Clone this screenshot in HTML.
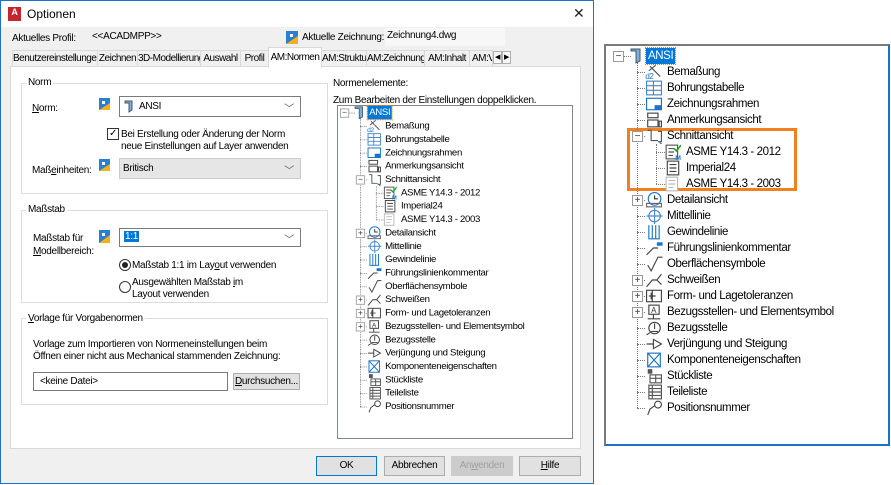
<!DOCTYPE html>
<html><head><meta charset="utf-8">
<style>
*{margin:0;padding:0;box-sizing:border-box}
body{width:891px;height:485px;background:#fff;position:relative;overflow:hidden;font-family:"Liberation Sans",sans-serif;font-size:10px;letter-spacing:-0.3px;color:#000}
.a{position:absolute;white-space:nowrap}
#dlg{position:absolute;left:0;top:0;width:594px;height:484px;background:#f0f0f0;border:1px solid #1a73c8}
.tab{position:absolute;top:50px;height:17px;border:1px solid #d9d9d9;background:#f0f0f0;font-size:10px;letter-spacing:-0.5px;line-height:15px;text-align:center;white-space:nowrap;overflow:hidden}
.grp{position:absolute;border:1px solid #dcdcdc}
.lbl{position:absolute;background:#fff;padding:0 2px;white-space:nowrap}
.combo{position:absolute;border:1px solid #7a7a7a;background:#fff;height:21px}
.chev{position:absolute;right:6px;top:3px;font-size:10px;color:#555}
.btn{position:absolute;top:456px;height:20px;border:1px solid #adadad;background:#e1e1e1;text-align:center;line-height:18px}
.tree{position:absolute;width:280px;height:370px;letter-spacing:-0.4px}
.tree .t{position:absolute;white-space:nowrap;font-size:11.5px;line-height:16px}
.tree .v{position:absolute;border-left:1px dotted #777;width:0}
.tree .h{position:absolute;border-top:1px dotted #777;height:0}
.tree .x{position:absolute;width:11px;height:11px;border:1px solid #999;background:#fff;font-size:10px;line-height:9px;text-align:center;color:#333;letter-spacing:0}
.tree svg{position:absolute}
</style></head><body>
<div id="dlg"></div>
<div class="a" style="left:1px;top:1px;width:592px;height:26px;background:#fff"></div>
<div class="a" style="left:8px;top:7px;width:13px;height:14px;background:#c4262e;color:#fff;font-size:9px;font-weight:bold;text-align:center;line-height:11px">A</div>
<div class="a" style="left:27px;top:7px;font-size:12px;letter-spacing:0">Optionen</div>
<div class="a" style="left:573px;top:5px;font-size:14px;color:#222">✕</div>

<div class="a" style="left:12px;top:33px">Aktuelles Profil:</div>
<div class="a" style="left:92px;top:31px">&lt;&lt;ACADMPP&gt;&gt;</div>
<svg class="a" style="left:286px;top:31px" width="12" height="13"><rect width="12" height="13" fill="#2a7fd0"/><polygon points="0,13 12,5 12,13" fill="#f0b020"/><rect x="4" y="3" width="3" height="3" fill="#fff"/></svg>
<div class="a" style="left:302px;top:32px">Aktuelle Zeichnung:</div>
<div class="a" style="left:385px;top:28px;width:120px;height:18px;background:#f7f7f7"></div>
<div class="a" style="left:387px;top:30px">Zeichnung4.dwg</div>

<div class="tab" style="left:12px;width:86px">Benutzereinstellungen</div>
<div class="tab" style="left:97px;width:41px">Zeichnen</div>
<div class="tab" style="left:137px;width:64px">3D-Modellierung</div>
<div class="tab" style="left:200px;width:41px">Auswahl</div>
<div class="tab" style="left:240px;width:29px">Profil</div>
<div class="tab" style="left:321px;width:46px">AM:Struktur</div>
<div class="tab" style="left:366px;width:59px">AM:Zeichnung</div>
<div class="tab" style="left:424px;width:46px">AM:Inhalt</div>
<div class="tab" style="left:469px;width:24px;text-align:left;padding-left:2px">AM:V</div>
<div class="a" style="left:493px;top:51px;width:9px;height:13px;border:1px solid #adadad;background:#f7f7f7;font-size:7px;line-height:11px;text-align:center">◀</div>
<div class="a" style="left:502px;top:51px;width:9px;height:13px;border:1px solid #adadad;background:#f7f7f7;font-size:7px;line-height:11px;text-align:center">▶</div>
<div class="a" style="left:10px;top:66px;width:571px;height:383px;background:#fff;border:1px solid #d9d9d9"></div>
<div class="tab" style="left:268px;top:47px;width:54px;height:21px;background:#fff;border-bottom:none;line-height:19px">AM:Normen</div>

<div class="grp" style="left:21px;top:83px;width:307px;height:111px"></div>
<div class="lbl" style="left:26px;top:77px">Norm</div>
<div class="a" style="left:32px;top:103px"><u>N</u>orm:</div>
<svg class="a" style="left:99px;top:98px" width="11" height="12"><rect width="11" height="12" fill="#2a7fd0"/><polygon points="0,12 11,5 11,12" fill="#f0b020"/><rect x="3" y="3" width="3" height="3" fill="#fff"/></svg>
<div class="combo" style="left:119px;top:96px;width:182px"><svg class="a" style="left:4px;top:3px" width="9" height="13"><path d="M1 1h7v9l-3 2v-9h-4z" fill="#7ab0e0" stroke="#456"/></svg><span class="a" style="left:19px;top:4px">ANSI</span><span class="chev">﹀</span></div>
<div class="a" style="left:107px;top:128px;width:12px;height:12px;border:1px solid #333;background:#fff;font-size:10px;line-height:10px;text-align:center">✓</div>
<div class="a" style="left:121px;top:129px">Bei Erstellung oder Änderung der Norm</div>
<div class="a" style="left:121px;top:141px">neue Einstellungen auf Layer anwenden</div>
<div class="a" style="left:32px;top:165px">Maß<u>e</u>inheiten:</div>
<svg class="a" style="left:99px;top:159px" width="11" height="12"><rect width="11" height="12" fill="#2a7fd0"/><polygon points="0,12 11,5 11,12" fill="#f0b020"/><rect x="3" y="3" width="3" height="3" fill="#fff"/></svg>
<div class="combo" style="left:119px;top:158px;width:182px;background:#e6e6e6;border-color:#ccc"><span class="a" style="left:3px;top:4px">Britisch</span><span class="chev">﹀</span></div>

<div class="grp" style="left:21px;top:210px;width:307px;height:93px"></div>
<div class="lbl" style="left:26px;top:204px">Maßstab</div>
<div class="a" style="left:33px;top:233px">Maßstab für</div>
<div class="a" style="left:33px;top:246px"><u>M</u>odellbereich:</div>
<svg class="a" style="left:99px;top:230px" width="11" height="13"><rect width="11" height="13" fill="#2a7fd0"/><polygon points="0,13 11,5 11,13" fill="#f0b020"/><rect x="3" y="3" width="3" height="3" fill="#fff"/></svg>
<div class="combo" style="left:119px;top:228px;width:182px;height:19px"><span class="a" style="left:4px;top:2px;background:#0078d7;color:#fff;padding:0 1px">1:1</span><span class="chev" style="top:2px">﹀</span></div>
<div class="a" style="left:119px;top:259px;width:12px;height:12px;border:1px solid #333;border-radius:50%;background:#fff"><div style="margin:2px;width:6px;height:6px;border-radius:50%;background:#222"></div></div>
<div class="a" style="left:132px;top:260px">Maßstab 1:1 im Lay<u>o</u>ut verwenden</div>
<div class="a" style="left:119px;top:281px;width:12px;height:12px;border:1px solid #333;border-radius:50%;background:#fff"></div>
<div class="a" style="left:132px;top:277px">Ausgewählten Maßstab <u>i</u>m</div>
<div class="a" style="left:132px;top:289px">Layout verwenden</div>

<div class="grp" style="left:21px;top:318px;width:307px;height:87px"></div>
<div class="lbl" style="left:26px;top:313px"><u>V</u>orlage für Vorgabenormen</div>
<div class="a" style="left:33px;top:339px">Vorlage zum Importieren von Normeneinstellungen beim</div>
<div class="a" style="left:33px;top:351px">Öffnen einer nicht aus Mechanical stammenden Zeichnung:</div>
<div class="a" style="left:33px;top:372px;width:195px;height:19px;border:1px solid #7a7a7a;background:#fff;padding:3px 6px">&lt;keine Datei&gt;</div>
<div class="a" style="left:233px;top:373px;width:67px;height:17px;border:1px solid #adadad;background:#e1e1e1;text-align:center;line-height:15px"><u>D</u>urchsuchen...</div>

<div class="a" style="left:333px;top:78px">Normenelemente:</div>
<div class="a" style="left:333px;top:95px">Zum Bearbeiten der Einstellungen doppelklicken.</div>
<div class="a" style="left:337px;top:105px;width:236px;height:334px;border:1px solid #828790;background:#fff"></div>

<div class="btn" style="left:316px;width:61px;border:1px solid #0078d7">OK</div>
<div class="btn" style="left:384px;width:61px">Abbrechen</div>
<div class="btn" style="left:451px;width:62px;color:#a0a0a0;border-color:#ccc;background:#ccc">An<u>w</u>enden</div>
<div class="btn" style="left:519px;width:62px"><u>H</u>ilfe</div>

<div class="a" style="left:604px;top:44px;width:286px;height:402px;border:2px solid #7a7a7a;border-right-color:#1a73c8;border-bottom-color:#1a73c8;background:#fff"></div>
<div class="a" style="left:627px;top:128px;width:170px;height:63px;border:3px solid #f08020"></div>

<!-- TREE 1 -->
<div class="tree" style="left:340px;top:106px;transform:scale(0.835);transform-origin:0 0">
<div class="v" style="left:24px;top:14px;height:346px"></div>
<div class="x" style="left:0;top:3px">−</div><div class="h" style="left:11px;top:8px;width:7px"></div>
<svg style="left:17px;top:0" width="12" height="16"><path d="M1 1h9v12l-4 2v-12h-5z" fill="#7ab0e0" stroke="#456"/></svg>
<div class="t" style="left:33px;top:0;background:#0078d7;color:#fff;padding:0 2px;outline:1px dotted #e08000">ANSI</div>
<div class="h" style="left:24px;top:24px;width:8px"></div><div class="h" style="left:24px;top:40px;width:8px"></div><div class="h" style="left:24px;top:56px;width:8px"></div><div class="h" style="left:24px;top:72px;width:8px"></div><div class="h" style="left:24px;top:88px;width:8px"></div><div class="h" style="left:24px;top:152px;width:8px"></div><div class="h" style="left:24px;top:168px;width:8px"></div><div class="h" style="left:24px;top:184px;width:8px"></div><div class="h" style="left:24px;top:200px;width:8px"></div><div class="h" style="left:24px;top:216px;width:8px"></div><div class="h" style="left:24px;top:232px;width:8px"></div><div class="h" style="left:24px;top:248px;width:8px"></div><div class="h" style="left:24px;top:264px;width:8px"></div><div class="h" style="left:24px;top:280px;width:8px"></div><div class="h" style="left:24px;top:296px;width:8px"></div><div class="h" style="left:24px;top:312px;width:8px"></div><div class="h" style="left:24px;top:328px;width:8px"></div><div class="h" style="left:24px;top:344px;width:8px"></div><div class="h" style="left:24px;top:360px;width:8px"></div>
<div class="x" style="left:19px;top:83px">−</div><div class="x" style="left:19px;top:147px">+</div><div class="x" style="left:19px;top:227px">+</div><div class="x" style="left:19px;top:243px">+</div><div class="x" style="left:19px;top:259px">+</div>
<div class="v" style="left:43px;top:96px;height:40px"></div>
<div class="h" style="left:43px;top:104px;width:9px"></div><div class="h" style="left:43px;top:120px;width:9px"></div><div class="h" style="left:43px;top:136px;width:9px"></div>
<svg style="left:32px;top:16px" width="18" height="16" viewBox="0 0 15 14"><path d="M4 2l9 9M3 6l6-5" stroke="#555" fill="none"/><text x="0" y="13" font-size="7" fill="#1a73c8" font-family="Liberation Sans">d2</text></svg>
<svg style="left:32px;top:32px" width="18" height="16" viewBox="0 0 15 14"><rect x="1" y="1" width="13" height="12" fill="#fff" stroke="#4a88c8"/><path d="M1 5h13M1 9h13M7 1v12" stroke="#4a88c8"/></svg>
<svg style="left:32px;top:48px" width="18" height="16" viewBox="0 0 15 14"><rect x="1" y="2" width="13" height="10" fill="#fff" stroke="#1a73c8"/><rect x="8" y="8" width="6" height="4" fill="#1a73c8"/></svg>
<svg style="left:32px;top:64px" width="18" height="16" viewBox="0 0 15 14"><rect x="2" y="1" width="9" height="4" fill="none" stroke="#444"/><rect x="2" y="7" width="9" height="6" fill="none" stroke="#444"/><rect x="12" y="8" width="2" height="5" fill="none" stroke="#444"/></svg>
<svg style="left:32px;top:80px" width="18" height="16" viewBox="0 0 15 14"><path d="M2 2h3v9h6M11 3h3v9h-3" stroke="#555" fill="none"/><path d="M12 12l2 2" stroke="#1a73c8"/></svg>
<svg style="left:52px;top:96px" width="16" height="16" viewBox="0 0 14 14"><rect x="1" y="1" width="10" height="12" fill="#fff" stroke="#555"/><path d="M3 4h5M3 7h5M3 10h4" stroke="#555"/><path d="M8 4l2 2 4-5" stroke="#2a2" fill="none" stroke-width="1.5"/><text x="9" y="14" font-size="6" fill="#1a73c8" font-weight="bold">M</text></svg>
<svg style="left:52px;top:112px" width="16" height="16" viewBox="0 0 14 14"><rect x="2" y="1" width="10" height="12" fill="#fff" stroke="#444"/><path d="M4 4h6M4 7h6M4 10h6" stroke="#444"/></svg>
<svg style="left:52px;top:128px" width="16" height="16" viewBox="0 0 14 14"><rect x="1" y="1" width="10" height="12" fill="#fff" stroke="#bbb"/><path d="M3 4h6M3 7h6M3 10h4" stroke="#bbb"/></svg>
<svg style="left:32px;top:144px" width="18" height="16" viewBox="0 0 15 14"><circle cx="8" cy="6" r="5.5" fill="#fff" stroke="#1a73c8"/><path d="M8 3v3h3" stroke="#333" fill="none"/><rect x="1" y="10" width="13" height="3" fill="none" stroke="#666"/></svg>
<svg style="left:32px;top:160px" width="18" height="16" viewBox="0 0 15 14"><circle cx="8" cy="7" r="5" fill="none" stroke="#4a88c8"/><path d="M1 7h14M8 0v14" stroke="#4a88c8"/></svg>
<svg style="left:32px;top:176px" width="18" height="16" viewBox="0 0 15 14"><path d="M3 1v12h9V1M6 1v12M9 1v12" stroke="#1a73c8" fill="none"/></svg>
<svg style="left:32px;top:192px" width="18" height="16" viewBox="0 0 15 14"><path d="M1 13l6-6h4" stroke="#444" fill="none"/><rect x="10" y="2" width="5" height="3" fill="#1a73c8"/></svg>
<svg style="left:32px;top:208px" width="18" height="16" viewBox="0 0 15 14"><path d="M2 8l3 5 6-12h4" stroke="#444" fill="none"/></svg>
<svg style="left:32px;top:224px" width="18" height="16" viewBox="0 0 15 14"><path d="M1 13l5-6h4l4-5M10 7l4 4" stroke="#444" fill="none"/></svg>
<svg style="left:32px;top:240px" width="18" height="16" viewBox="0 0 15 14"><rect x="1" y="2" width="13" height="10" fill="none" stroke="#444"/><path d="M6 2v10M3 7h6M5 4v6" stroke="#444"/></svg>
<svg style="left:32px;top:256px" width="18" height="16" viewBox="0 0 15 14"><rect x="3" y="1" width="9" height="8" fill="none" stroke="#444"/><text x="5" y="8" font-size="7" fill="#333">A</text><path d="M2 13h11M7 9v4" stroke="#444"/></svg>
<svg style="left:32px;top:272px" width="18" height="16" viewBox="0 0 15 14"><circle cx="8" cy="7" r="5" fill="none" stroke="#444"/><path d="M8 3v5M5 10h6M1 13l3-2" stroke="#444"/></svg>
<svg style="left:32px;top:288px" width="18" height="16" viewBox="0 0 15 14"><path d="M1 7h6M7 3l7 4-7 4z" stroke="#444" fill="none"/></svg>
<svg style="left:32px;top:304px" width="18" height="16" viewBox="0 0 15 14"><rect x="2" y="1" width="11" height="12" fill="none" stroke="#1a73c8"/><path d="M2 1l11 12M13 1l-11 12" stroke="#1a73c8"/></svg>
<svg style="left:32px;top:320px" width="18" height="16" viewBox="0 0 15 14"><rect x="2" y="1" width="4" height="4" fill="#555"/><rect x="4" y="6" width="10" height="7" fill="none" stroke="#555"/><path d="M4 9h10M9 6v7" stroke="#555"/></svg>
<svg style="left:32px;top:336px" width="18" height="16" viewBox="0 0 15 14"><rect x="3" y="1" width="11" height="12" fill="none" stroke="#555"/><path d="M3 4h11M3 7h11M3 10h11M6 1v12" stroke="#555"/></svg>
<svg style="left:32px;top:352px" width="18" height="16" viewBox="0 0 15 14"><path d="M2 13l2-5 4-3" stroke="#444" fill="none"/><circle cx="11" cy="4" r="3" fill="none" stroke="#444"/></svg>
<div class="t" style="left:54px;top:16px">Bemaßung</div>
<div class="t" style="left:54px;top:32px">Bohrungstabelle</div>
<div class="t" style="left:54px;top:48px">Zeichnungsrahmen</div>
<div class="t" style="left:54px;top:64px">Anmerkungsansicht</div>
<div class="t" style="left:54px;top:80px">Schnittansicht</div>
<div class="t" style="left:73px;top:96px">ASME Y14.3 - 2012</div>
<div class="t" style="left:73px;top:112px">Imperial24</div>
<div class="t" style="left:73px;top:128px">ASME Y14.3 - 2003</div>
<div class="t" style="left:54px;top:144px">Detailansicht</div>
<div class="t" style="left:54px;top:160px">Mittellinie</div>
<div class="t" style="left:54px;top:176px">Gewindelinie</div>
<div class="t" style="left:54px;top:192px">Führungslinienkommentar</div>
<div class="t" style="left:54px;top:208px">Oberflächensymbole</div>
<div class="t" style="left:54px;top:224px">Schweißen</div>
<div class="t" style="left:54px;top:240px">Form- und Lagetoleranzen</div>
<div class="t" style="left:54px;top:256px">Bezugsstellen- und Elementsymbol</div>
<div class="t" style="left:54px;top:272px">Bezugsstelle</div>
<div class="t" style="left:54px;top:288px">Verjüngung und Steigung</div>
<div class="t" style="left:54px;top:304px">Komponenteneigenschaften</div>
<div class="t" style="left:54px;top:320px">Stückliste</div>
<div class="t" style="left:54px;top:336px">Teileliste</div>
<div class="t" style="left:54px;top:352px">Positionsnummer</div>
</div>

<!-- TREE 2 -->
<div class="tree" style="left:613px;top:48px">
<div class="v" style="left:24px;top:14px;height:346px"></div>
<div class="x" style="left:0;top:3px">−</div><div class="h" style="left:11px;top:8px;width:7px"></div>
<svg style="left:17px;top:0" width="12" height="16"><path d="M1 1h9v12l-4 2v-12h-5z" fill="#7ab0e0" stroke="#456"/></svg>
<div class="t" style="left:33px;top:0;background:#0078d7;color:#fff;padding:0 2px;outline:1px dotted #e08000">ANSI</div>
<div class="h" style="left:24px;top:24px;width:8px"></div><div class="h" style="left:24px;top:40px;width:8px"></div><div class="h" style="left:24px;top:56px;width:8px"></div><div class="h" style="left:24px;top:72px;width:8px"></div><div class="h" style="left:24px;top:88px;width:8px"></div><div class="h" style="left:24px;top:152px;width:8px"></div><div class="h" style="left:24px;top:168px;width:8px"></div><div class="h" style="left:24px;top:184px;width:8px"></div><div class="h" style="left:24px;top:200px;width:8px"></div><div class="h" style="left:24px;top:216px;width:8px"></div><div class="h" style="left:24px;top:232px;width:8px"></div><div class="h" style="left:24px;top:248px;width:8px"></div><div class="h" style="left:24px;top:264px;width:8px"></div><div class="h" style="left:24px;top:280px;width:8px"></div><div class="h" style="left:24px;top:296px;width:8px"></div><div class="h" style="left:24px;top:312px;width:8px"></div><div class="h" style="left:24px;top:328px;width:8px"></div><div class="h" style="left:24px;top:344px;width:8px"></div><div class="h" style="left:24px;top:360px;width:8px"></div>
<div class="x" style="left:19px;top:83px">−</div><div class="x" style="left:19px;top:147px">+</div><div class="x" style="left:19px;top:227px">+</div><div class="x" style="left:19px;top:243px">+</div><div class="x" style="left:19px;top:259px">+</div>
<div class="v" style="left:43px;top:96px;height:40px"></div>
<div class="h" style="left:43px;top:104px;width:9px"></div><div class="h" style="left:43px;top:120px;width:9px"></div><div class="h" style="left:43px;top:136px;width:9px"></div>
<svg style="left:32px;top:16px" width="18" height="16" viewBox="0 0 15 14"><path d="M4 2l9 9M3 6l6-5" stroke="#555" fill="none"/><text x="0" y="13" font-size="7" fill="#1a73c8" font-family="Liberation Sans">d2</text></svg>
<svg style="left:32px;top:32px" width="18" height="16" viewBox="0 0 15 14"><rect x="1" y="1" width="13" height="12" fill="#fff" stroke="#4a88c8"/><path d="M1 5h13M1 9h13M7 1v12" stroke="#4a88c8"/></svg>
<svg style="left:32px;top:48px" width="18" height="16" viewBox="0 0 15 14"><rect x="1" y="2" width="13" height="10" fill="#fff" stroke="#1a73c8"/><rect x="8" y="8" width="6" height="4" fill="#1a73c8"/></svg>
<svg style="left:32px;top:64px" width="18" height="16" viewBox="0 0 15 14"><rect x="2" y="1" width="9" height="4" fill="none" stroke="#444"/><rect x="2" y="7" width="9" height="6" fill="none" stroke="#444"/><rect x="12" y="8" width="2" height="5" fill="none" stroke="#444"/></svg>
<svg style="left:32px;top:80px" width="18" height="16" viewBox="0 0 15 14"><path d="M2 2h3v9h6M11 3h3v9h-3" stroke="#555" fill="none"/><path d="M12 12l2 2" stroke="#1a73c8"/></svg>
<svg style="left:52px;top:96px" width="16" height="16" viewBox="0 0 14 14"><rect x="1" y="1" width="10" height="12" fill="#fff" stroke="#555"/><path d="M3 4h5M3 7h5M3 10h4" stroke="#555"/><path d="M8 4l2 2 4-5" stroke="#2a2" fill="none" stroke-width="1.5"/><text x="9" y="14" font-size="6" fill="#1a73c8" font-weight="bold">M</text></svg>
<svg style="left:52px;top:112px" width="16" height="16" viewBox="0 0 14 14"><rect x="2" y="1" width="10" height="12" fill="#fff" stroke="#444"/><path d="M4 4h6M4 7h6M4 10h6" stroke="#444"/></svg>
<svg style="left:52px;top:128px" width="16" height="16" viewBox="0 0 14 14"><rect x="1" y="1" width="10" height="12" fill="#fff" stroke="#bbb"/><path d="M3 4h6M3 7h6M3 10h4" stroke="#bbb"/></svg>
<svg style="left:32px;top:144px" width="18" height="16" viewBox="0 0 15 14"><circle cx="8" cy="6" r="5.5" fill="#fff" stroke="#1a73c8"/><path d="M8 3v3h3" stroke="#333" fill="none"/><rect x="1" y="10" width="13" height="3" fill="none" stroke="#666"/></svg>
<svg style="left:32px;top:160px" width="18" height="16" viewBox="0 0 15 14"><circle cx="8" cy="7" r="5" fill="none" stroke="#4a88c8"/><path d="M1 7h14M8 0v14" stroke="#4a88c8"/></svg>
<svg style="left:32px;top:176px" width="18" height="16" viewBox="0 0 15 14"><path d="M3 1v12h9V1M6 1v12M9 1v12" stroke="#1a73c8" fill="none"/></svg>
<svg style="left:32px;top:192px" width="18" height="16" viewBox="0 0 15 14"><path d="M1 13l6-6h4" stroke="#444" fill="none"/><rect x="10" y="2" width="5" height="3" fill="#1a73c8"/></svg>
<svg style="left:32px;top:208px" width="18" height="16" viewBox="0 0 15 14"><path d="M2 8l3 5 6-12h4" stroke="#444" fill="none"/></svg>
<svg style="left:32px;top:224px" width="18" height="16" viewBox="0 0 15 14"><path d="M1 13l5-6h4l4-5M10 7l4 4" stroke="#444" fill="none"/></svg>
<svg style="left:32px;top:240px" width="18" height="16" viewBox="0 0 15 14"><rect x="1" y="2" width="13" height="10" fill="none" stroke="#444"/><path d="M6 2v10M3 7h6M5 4v6" stroke="#444"/></svg>
<svg style="left:32px;top:256px" width="18" height="16" viewBox="0 0 15 14"><rect x="3" y="1" width="9" height="8" fill="none" stroke="#444"/><text x="5" y="8" font-size="7" fill="#333">A</text><path d="M2 13h11M7 9v4" stroke="#444"/></svg>
<svg style="left:32px;top:272px" width="18" height="16" viewBox="0 0 15 14"><circle cx="8" cy="7" r="5" fill="none" stroke="#444"/><path d="M8 3v5M5 10h6M1 13l3-2" stroke="#444"/></svg>
<svg style="left:32px;top:288px" width="18" height="16" viewBox="0 0 15 14"><path d="M1 7h6M7 3l7 4-7 4z" stroke="#444" fill="none"/></svg>
<svg style="left:32px;top:304px" width="18" height="16" viewBox="0 0 15 14"><rect x="2" y="1" width="11" height="12" fill="none" stroke="#1a73c8"/><path d="M2 1l11 12M13 1l-11 12" stroke="#1a73c8"/></svg>
<svg style="left:32px;top:320px" width="18" height="16" viewBox="0 0 15 14"><rect x="2" y="1" width="4" height="4" fill="#555"/><rect x="4" y="6" width="10" height="7" fill="none" stroke="#555"/><path d="M4 9h10M9 6v7" stroke="#555"/></svg>
<svg style="left:32px;top:336px" width="18" height="16" viewBox="0 0 15 14"><rect x="3" y="1" width="11" height="12" fill="none" stroke="#555"/><path d="M3 4h11M3 7h11M3 10h11M6 1v12" stroke="#555"/></svg>
<svg style="left:32px;top:352px" width="18" height="16" viewBox="0 0 15 14"><path d="M2 13l2-5 4-3" stroke="#444" fill="none"/><circle cx="11" cy="4" r="3" fill="none" stroke="#444"/></svg>
<div class="t" style="left:54px;top:16px">Bemaßung</div>
<div class="t" style="left:54px;top:32px">Bohrungstabelle</div>
<div class="t" style="left:54px;top:48px">Zeichnungsrahmen</div>
<div class="t" style="left:54px;top:64px">Anmerkungsansicht</div>
<div class="t" style="left:54px;top:80px">Schnittansicht</div>
<div class="t" style="left:73px;top:96px">ASME Y14.3 - 2012</div>
<div class="t" style="left:73px;top:112px">Imperial24</div>
<div class="t" style="left:73px;top:128px">ASME Y14.3 - 2003</div>
<div class="t" style="left:54px;top:144px">Detailansicht</div>
<div class="t" style="left:54px;top:160px">Mittellinie</div>
<div class="t" style="left:54px;top:176px">Gewindelinie</div>
<div class="t" style="left:54px;top:192px">Führungslinienkommentar</div>
<div class="t" style="left:54px;top:208px">Oberflächensymbole</div>
<div class="t" style="left:54px;top:224px">Schweißen</div>
<div class="t" style="left:54px;top:240px">Form- und Lagetoleranzen</div>
<div class="t" style="left:54px;top:256px">Bezugsstellen- und Elementsymbol</div>
<div class="t" style="left:54px;top:272px">Bezugsstelle</div>
<div class="t" style="left:54px;top:288px">Verjüngung und Steigung</div>
<div class="t" style="left:54px;top:304px">Komponenteneigenschaften</div>
<div class="t" style="left:54px;top:320px">Stückliste</div>
<div class="t" style="left:54px;top:336px">Teileliste</div>
<div class="t" style="left:54px;top:352px">Positionsnummer</div>
</div>
</body></html>
